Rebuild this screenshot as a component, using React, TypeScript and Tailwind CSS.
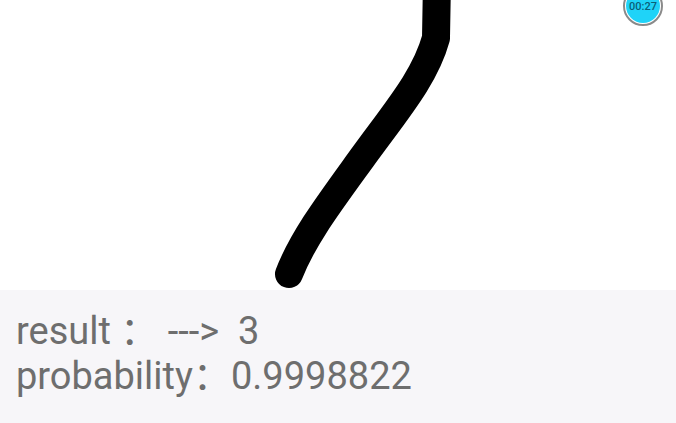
export default function App() {
  return (
    <div className="relative w-[676px] h-[423px] overflow-hidden bg-white flex flex-col font-['Roboto','Noto_Sans_CJK_SC',sans-serif]">
      <div className="h-[290px] shrink-0 bg-white">
        <svg width="676" height="290" viewBox="0 0 676 290">
          <path
            d="M 289 274 C 303 238, 328 205, 362 158 S 425 78, 436 38 L 437 -20"
            fill="none"
            stroke="#000"
            strokeWidth="28"
            strokeLinecap="round"
            strokeLinejoin="round"
          />
        </svg>
      </div>
      <div className="flex-1 bg-[#f7f6f9] pl-[16px] pt-[19px] text-[38px] leading-[45px] text-[#6e6e6e] whitespace-pre">
        <div>{'result ： --->  3'}</div>
        <div>{'probability：0.9998822'}</div>
      </div>
      <div className="absolute left-[623px] top-[-14px] w-[40px] h-[40px] rounded-full border-2 border-[#8a8a8a] bg-white p-[1px]">
        <div className="w-full h-full rounded-full bg-[#1fd3f8] flex items-center justify-center pt-[1px]">
          <span className="text-[11px] leading-none text-[#0b5f78] font-medium">00:27</span>
        </div>
      </div>
    </div>
  );
}
